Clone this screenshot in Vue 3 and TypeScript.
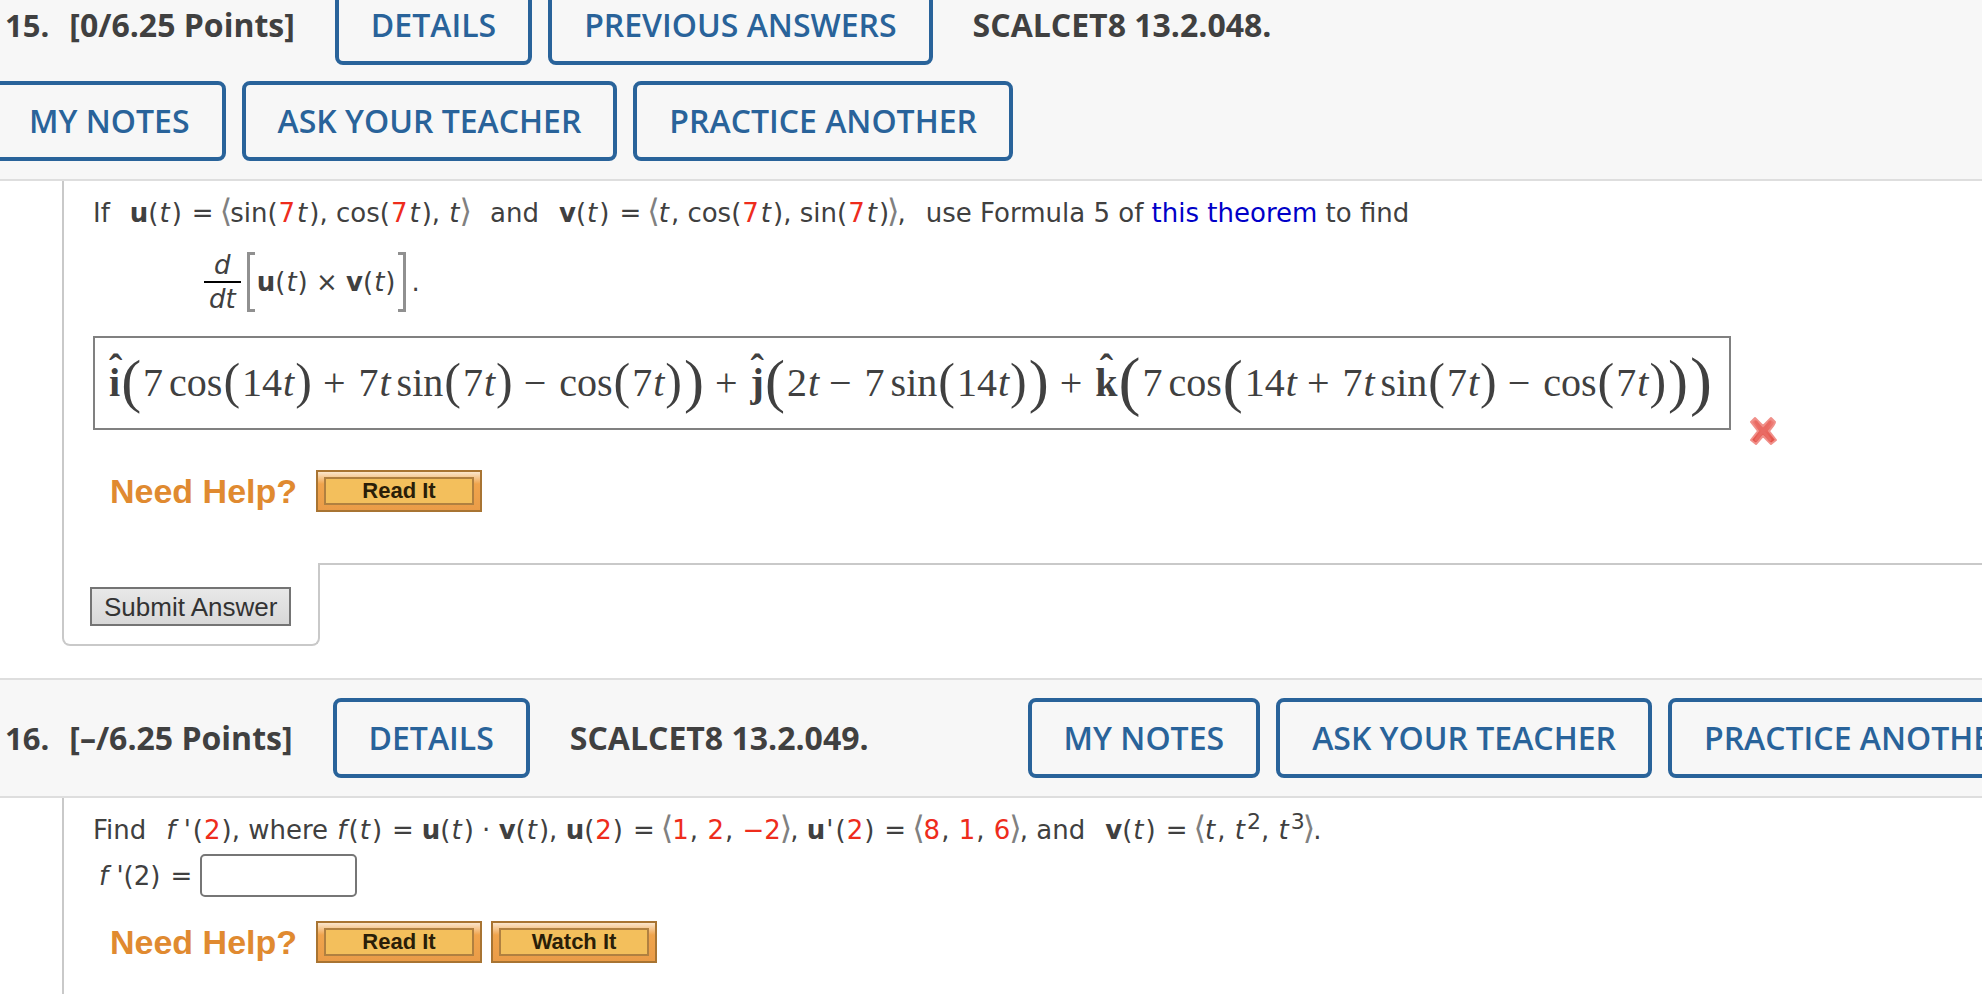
<script setup lang="ts">
import { ref } from 'vue'

type Kind = 'digits' | 'var' | 'fn' | 'op' | 'vec' | 'open' | 'close'
interface Token {
  text: string
  kind: Kind
  size?: 1 | 2 | 3
}

const o = (size: 1 | 2 | 3): Token => ({ text: '(', kind: 'open', size })
const c = (size: 1 | 2 | 3): Token => ({ text: ')', kind: 'close', size })
const n = (text: string): Token => ({ text, kind: 'digits' })
const fn = (text: string): Token => ({ text, kind: 'fn' })
const op = (text: string): Token => ({ text, kind: 'op' })
const vec = (text: string): Token => ({ text, kind: 'vec' })
const t: Token = { text: 't', kind: 'var' }

const answer: Token[] = [
  vec('i'), o(2), n('7'), fn('cos'), o(1), n('14'), t, c(1), op('+'), n('7'), t, fn('sin'), o(1), n('7'), t, c(1),
  op('−'), fn('cos'), o(1), n('7'), t, c(1), c(2), op('+'),
  vec('j'), o(2), n('2'), t, op('−'), n('7'), fn('sin'), o(1), n('14'), t, c(1), c(2), op('+'),
  vec('k'), o(3), n('7'), fn('cos'), o(2), n('14'), t, op('+'), n('7'), t, fn('sin'), o(1), n('7'), t, c(1),
  op('−'), fn('cos'), o(1), n('7'), t, c(1), c(2), c(3),
]

const tools = ['MY NOTES', 'ASK YOUR TEACHER', 'PRACTICE ANOTHER']
const fPrime = ref('')
</script>

<template>
  <main class="page">
    <header class="head head-first">
      <div class="row">
        <span class="num">15.</span>
        <strong class="points">[0/6.25 Points]</strong>
        <button class="btn" type="button">DETAILS</button>
        <button class="btn" type="button">PREVIOUS ANSWERS</button>
        <strong class="code">SCALCET8 13.2.048.</strong>
      </div>
      <div class="row row-tools">
        <button v-for="tool in tools" :key="tool" class="btn" type="button">{{ tool }}</button>
      </div>
    </header>

    <section class="question">
      <div class="panel">
        <p class="line">
          If<b class="wide">u</b>(<i>t</i>)<span class="eq">=</span><span class="ang">⟨</span>sin(<em>7</em><i>t</i>),
          cos(<em>7</em><i>t</i>), <i>t</i><span class="ang">⟩</span><span class="wide">and</span><b class="wide">v</b>(<i>t</i>)<span class="eq">=</span><span class="ang">⟨</span><i>t</i>,
          cos(<em>7</em><i>t</i>), sin(<em>7</em><i>t</i>)<span class="ang">⟩</span>,<span class="wide">use</span>
          Formula 5 of <a href="#theorem">this theorem</a> to find
        </p>
        <div class="derivative">
          <span class="frac"><i>d</i><i class="den">dt</i></span>
          <span class="bracket"><b>u</b>(<i>t</i>) × <b>v</b>(<i>t</i>)</span>
          <span>.</span>
        </div>
        <div class="answer-row">
          <div class="answer">
            <span v-for="(tok, k) in answer" :key="k" class="tok" :class="[tok.kind, tok.size ? 'size' + tok.size : '']">{{ tok.text }}<span v-if="tok.kind === 'vec'" class="hat">ˆ</span></span>
          </div>
          <svg class="wrong" viewBox="0 0 28 30" role="img" aria-label="Incorrect">
            <defs>
              <linearGradient id="wrong-fill" x1="0" y1="0" x2="0" y2="1">
                <stop offset="0" stop-color="#f08680" />
                <stop offset="1" stop-color="#e2493f" />
              </linearGradient>
            </defs>
            <path
              d="M6 2 L14 10 L22 2 L26 6 Q26 8 20 15 L27 24 L22 28 L14 20 L7 28 L2 24 L9 15 L2 6 Z"
              fill="url(#wrong-fill)" stroke="#f0908a" stroke-width="2" stroke-linejoin="round"
            />
            <path d="M7 6 L21 24 M21 6 L7 24" stroke="#e96a63" stroke-width="3" stroke-linecap="round" />
          </svg>
        </div>
        <div class="help">
          <span class="help-label">Need Help?</span>
          <button class="help-btn" type="button">Read It</button>
        </div>
      </div>
      <div class="foot">
        <div class="tab"><button class="submit" type="button">Submit Answer</button></div>
        <div class="rule"></div>
      </div>
    </section>

    <header class="head">
      <div class="row">
        <span class="num">16.</span>
        <strong class="points">[–/6.25 Points]</strong>
        <button class="btn" type="button">DETAILS</button>
        <strong class="code">SCALCET8 13.2.049.</strong>
        <div class="row right-tools">
          <button v-for="tool in tools" :key="tool" class="btn" type="button">{{ tool }}</button>
        </div>
      </div>
    </header>

    <section class="question last">
      <div class="panel">
        <p class="line">
          Find<i class="wide">f '</i>(<em>2</em>), where <i>f</i>(<i>t</i>)<span class="eq">=</span><b>u</b>(<i>t</i>) · <b>v</b>(<i>t</i>),
          <b>u</b>(<em>2</em>)<span class="eq">=</span><span class="ang">⟨</span><em>1</em>, <em>2</em>, <em>−2</em><span class="ang">⟩</span>,
          <b>u</b><i>'</i>(<em>2</em>)<span class="eq">=</span><span class="ang">⟨</span><em>8</em>, <em>1</em>, <em>6</em><span class="ang">⟩</span>,
          and<b class="wide">v</b>(<i>t</i>)<span class="eq">=</span><span class="ang">⟨</span><i>t</i>, <i>t</i><sup>2</sup>, <i>t</i><sup>3</sup><span class="ang">⟩</span>.
        </p>
        <div class="entry">
          <label for="f-prime"><i>f '</i>(2)<span class="eq">=</span></label>
          <input id="f-prime" v-model="fPrime" type="text" />
        </div>
        <div class="help">
          <span class="help-label">Need Help?</span>
          <button class="help-btn" type="button">Read It</button>
          <button class="help-btn" type="button">Watch It</button>
        </div>
      </div>
    </section>
  </main>
</template>

<style>
body {
  background: #fff;
}
</style>

<style scoped>
.page {
  display: flex;
  flex-direction: column;
  height: 100vh;
  overflow: hidden;
  color: #404040;
  font-family: "DejaVu Sans", Verdana, sans-serif;
  font-size: 26px;
}
.head {
  flex: none;
  box-sizing: border-box;
  padding: 18px 0;
  border-top: 2px solid #dedede;
  border-bottom: 2px solid #dedede;
  background: #f7f7f7;
  font-family: "Open Sans", sans-serif;
  font-size: 32px;
  line-height: 44px;
}
.head-first {
  margin-top: -35px;
}
.row {
  display: flex;
  align-items: center;
  gap: 16px;
  white-space: nowrap;
}
.row > * {
  flex: none;
}
.row-tools {
  margin: 16px 0 0 -7px;
}
.num {
  margin-left: 5px;
  font-size: 31px;
  font-weight: 700;
}
.points {
  margin: 0 24px 0 4px;
}
.code {
  margin-left: 24px;
}
.right-tools {
  margin-left: 143px;
}
.btn {
  padding: 14px 32px;
  border: 4px solid #29639a;
  border-radius: 8px;
  background: transparent;
  color: #29639a;
  font: 600 32px/44px "Open Sans", sans-serif;
}
.question {
  flex: none;
  padding-left: 62px;
}
.last {
  display: flex;
  flex: 1 0 auto;
}
.last .panel {
  flex: 1;
}
.panel {
  padding: 14px 0 51px 29px;
  border-left: 2px solid #c9c9c9;
}
.line {
  margin: 0;
  line-height: 32px;
  white-space: nowrap;
}
.line i {
  margin: 0 2px 0 1px;
}
.line em {
  margin: 0 1px;
  color: #ee2c1c;
  font-style: normal;
}
.line a {
  color: #0000c8;
  text-decoration: none;
}
.line .wide {
  margin-left: 20px;
}
.eq {
  margin: 0 8px 0 10px;
}
.ang {
  margin: 0 -2px;
  color: #808080;
  font-size: 32px;
  line-height: 32px;
}
.line sup {
  font-size: 22px;
  line-height: 0;
  vertical-align: 10px;
}
.derivative {
  display: flex;
  align-items: center;
  gap: 6px;
  margin: 20px 0 0 111px;
  line-height: 32px;
}
.frac {
  display: flex;
  flex-direction: column;
  align-items: center;
}
.frac i {
  padding: 0 5px;
}
.den {
  border-top: 2px solid #000;
}
.bracket {
  position: relative;
  padding: 14px 10px;
}
.bracket i {
  margin: 0 1px;
}
.bracket::before,
.bracket::after {
  content: "";
  position: absolute;
  top: 0;
  bottom: 0;
  width: 5px;
  border: 3px solid #909090;
}
.bracket::before {
  left: 0;
  border-right: 0;
}
.bracket::after {
  right: 0;
  border-left: 0;
}
.answer-row {
  display: flex;
  align-items: flex-end;
  gap: 18px;
  margin-top: 21px;
}
.answer {
  display: flex;
  align-items: center;
  height: 90px;
  padding: 0 16px 0 14px;
  border: 2px solid #808080;
  font: 40px/90px "Liberation Serif", serif;
  white-space: nowrap;
}
.tok {
  flex: none;
}
.var {
  margin-left: 1px;
  font-style: italic;
}
.fn {
  margin-left: 6px;
}
.op {
  margin: 0 13px 0 10px;
}
.op + .fn {
  margin-left: 0;
}
.vec {
  position: relative;
  font-weight: 700;
}
.hat {
  position: absolute;
  top: 19px;
  right: 0;
  left: 0;
  line-height: 24px;
  text-align: center;
}
.open,
.close {
  padding-bottom: 4px;
}
.open {
  margin: 0 2px 0 1px;
}
.close {
  margin: 0 1px;
}
.size1 {
  font-size: 50px;
}
.size2 {
  font-size: 60px;
}
.size3 {
  font-size: 66px;
}
.wrong {
  width: 28px;
  height: 30px;
  margin-bottom: -16px;
}
.help {
  display: flex;
  align-items: center;
  gap: 9px;
  margin: 40px 0 0 17px;
}
.help-label {
  width: 197px;
  color: #e08a30;
  font: 700 34px/42px "Liberation Sans", Arial, sans-serif;
}
.help-btn {
  box-sizing: border-box;
  width: 166px;
  height: 42px;
  padding: 4px 6px;
  border: 2px solid #a87432;
  background:
    linear-gradient(#f3bf5c, #f3bf5c) 8px 7px / 146px 24px no-repeat,
    linear-gradient(#b08040, #b08040) 6px 5px / 150px 28px no-repeat,
    linear-gradient(#fbe6cc, #f0a44c 12px, #ea9c48);
  color: #2a1e08;
  font: 700 22px/30px "Liberation Sans", Arial, sans-serif;
}
.foot {
  display: flex;
  margin-bottom: 32px;
}
.tab {
  box-sizing: border-box;
  width: 258px;
  height: 83px;
  padding: 24px 26px 18px;
  border: 2px solid #c9c9c9;
  border-top: 0;
  border-radius: 0 0 8px 8px;
}
.rule {
  flex: 1;
  border-top: 2px solid #c9c9c9;
}
.submit {
  display: block;
  box-sizing: border-box;
  height: 39px;
  padding: 0 12px;
  border: 2px solid #747474;
  background: linear-gradient(#e8e8e8, #d8d8d8);
  color: #333;
  font: 26px/34px "Liberation Sans", Arial, sans-serif;
  white-space: nowrap;
}
.entry {
  display: flex;
  align-items: center;
  margin: 8px 0 0 6px;
}
.entry input {
  box-sizing: border-box;
  width: 157px;
  height: 43px;
  border: 2px solid #767676;
  border-radius: 5px;
  background: #fff;
  font: inherit;
}
.last .help {
  margin-top: 24px;
}
</style>
